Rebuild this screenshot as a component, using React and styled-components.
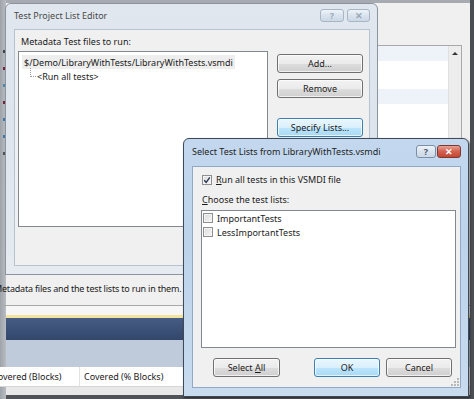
import React from "react";
import styled, { createGlobalStyle, css } from "styled-components";

const GlobalStyle = createGlobalStyle`
  html, body { margin: 0; padding: 0; }
  body {
    font-family: "Noto Sans", "Open Sans", sans-serif;
    font-size: 9px;
    color: #1b1b1b;
  }
`;

const Desktop = styled.div`
  position: relative;
  width: 474px;
  height: 399px;
  overflow: hidden;
  background: #f0f0f0;
`;

/* ---------- background Visual Studio window ---------- */

const Backdrop = styled.div`
  position: absolute;
  inset: 0;
  display: flex;
  border-right: 4px solid #4b4e53;
`;

const ToolStrip = styled.div`
  width: 6px;
  flex: none;
  background: linear-gradient(90deg, #9ea3aa, #b9bdc2);
  display: flex;
  flex-direction: column;
  gap: 14px;
  padding-top: 50px;
  align-items: flex-end;
`;

const ToolDot = styled.span`
  width: 3px;
  height: 3px;
  background: ${(p) => p.color};
`;

const BackMain = styled.div`
  flex: 1;
  min-width: 0;
  display: flex;
  flex-direction: column;
  border-top: 3px solid #a7abb1;
`;

const BackTop = styled.div`
  height: 269px;
  flex: none;
  display: flex;
  justify-content: flex-end;
  padding: 42px 8px 0 0;
  box-sizing: border-box;
`;

const BackList = styled.div`
  width: 200px;
  height: 92px;
  border: 1px solid #a9a9a9;
  display: flex;
  background: #fff;
`;

const BackRows = styled.div`
  flex: 1;
  display: flex;
  flex-direction: column;
`;

const BackRow = styled.div`
  height: ${(p) => p.h}px;
  background: ${(p) => (p.alt ? "#eef3fa" : "#fff")};
`;

const BackScroll = styled.div`
  width: 13px;
  background: #ededed;
  border-left: 1px solid #e0e0e0;
  display: flex;
  justify-content: center;
  padding-top: 6px;
  box-sizing: border-box;
`;

const UpArrow = styled.span`
  width: 0;
  height: 0;
  border-left: 3px solid transparent;
  border-right: 3px solid transparent;
  border-bottom: 3px solid #333;
`;

const HelpText = styled.div`
  height: 33px;
  flex: none;
  display: flex;
  align-items: center;
  margin-left: -12px;
  letter-spacing: -0.2px;
  border-bottom: 1px solid #a8a8a8;
  white-space: nowrap;
`;

const Gap = styled.div`
  height: 9px;
  flex: none;
  background: #f6f6f6;
  border-bottom: 3px solid #f3e39c;
`;

const NavyBand = styled.div`
  height: 22px;
  flex: none;
  background: linear-gradient(#465c84, #33476b);
`;

const SteelBand = styled.div`
  height: 27px;
  flex: none;
  background: #bfcadb;
`;

const HeaderRow = styled.div`
  height: 19px;
  flex: none;
  background: #fff;
  display: flex;
  margin-left: -14px;
  border-bottom: 1px solid #d5d5d5;
`;

const HeaderCell = styled.div`
  width: ${(p) => p.w}px;
  flex: none;
  display: flex;
  align-items: center;
  padding-left: ${(p) => p.pad}px;
  white-space: nowrap;
  border-right: 1px solid #e3e3e3;
  box-sizing: border-box;
`;

const BackBottom = styled.div`
  flex: 1;
  background: #e8e8e8;
  border-bottom: 4px solid #505357;
`;

/* ---------- dialog windows ---------- */

const Window = styled.div`
  position: absolute;
  left: ${(p) => p.x}px;
  top: ${(p) => p.y}px;
  width: ${(p) => p.w}px;
  height: ${(p) => p.h}px;
  box-sizing: border-box;
  display: flex;
  flex-direction: column;
  padding: 0 7px 8px 8px;
  border-radius: 6px 6px 0 0;
  ${(p) =>
    p.active
      ? css`
          border: 1px solid #3e4a58;
          background: linear-gradient(#c3d8ee, #bcd3ea 40%, #c8dbef);
          box-shadow: 1px 1px 2px rgba(0, 0, 0, 0.5);
        `
      : css`
          border: 1px solid #8a939e;
          background: linear-gradient(#e1e7ee, #dde4ec 40%, #e5ebf1);
        `}
`;

const TitleBar = styled.div`
  height: ${(p) => p.h}px;
  flex: none;
  display: flex;
  align-items: center;
  gap: ${(p) => p.gap}px;
  padding-bottom: 2px;
  box-sizing: border-box;
`;

const Title = styled.div`
  flex: 1;
  color: ${(p) => (p.active ? "#1e1e1e" : "#4a4a4a")};
  white-space: nowrap;
`;

const CaptionButton = styled.div`
  width: ${(p) => p.w}px;
  height: 13px;
  box-sizing: border-box;
  border-radius: 3px;
  display: flex;
  align-items: center;
  justify-content: center;
  font-size: 9px;
  font-weight: bold;
  ${(p) =>
    p.close && p.active
      ? css`
          border: 1px solid #7a3a32;
          background: linear-gradient(#e8a095, #d2604e 50%, #c44632);
          color: #fff;
        `
      : css`
          border: 1px solid ${p.active ? "#7c8fa6" : "#a8b5c4"};
          background: linear-gradient(#eef3f8, #d9e3ee 50%, #cbd8e6);
          color: ${p.active ? "#4a5a6e" : "#9aa7b6"};
        `}
`;

const Client = styled.div`
  flex: 1;
  background: #f0f0f0;
  border: 1px solid ${(p) => (p.active ? "#8fa9c6" : "#b7c3d0")};
  position: relative;
`;

const Label = styled.div`
  line-height: 16px;
  white-space: nowrap;
`;

const Mnemonic = styled.span`
  text-decoration: underline;
`;

const ListBox = styled.div`
  width: ${(p) => p.w}px;
  height: ${(p) => p.h}px;
  box-sizing: border-box;
  background: #fff;
  border: 1px solid #828790;
`;

const Button = styled.div`
  width: ${(p) => p.w}px;
  height: 19px;
  box-sizing: border-box;
  border-radius: 3px;
  display: flex;
  align-items: center;
  justify-content: center;
  white-space: nowrap;
  border: 1px solid ${(p) => (p.primary ? "#3c7fb1" : "#707070")};
  background: ${(p) =>
    p.primary
      ? "linear-gradient(#eaf6fd, #d9f0fc 50%, #bee6fd 51%, #a7d9f5)"
      : "linear-gradient(#f2f2f2, #ebebeb 50%, #dddddd 51%, #cfcfcf)"};
  box-shadow: inset 0 0 0 1px rgba(255, 255, 255, 0.7);
`;

/* editor dialog */

const EditorBody = styled.div`
  display: grid;
  grid-template-columns: 250px 86px;
  column-gap: 9px;
  padding: 4px 0 0 3px;
`;

const EditorLabel = styled(Label)`
  grid-column: 1 / 3;
  padding-left: 3px;
  height: 17px;
`;

const ButtonColumn = styled.div`
  display: flex;
  flex-direction: column;
  padding-top: 3px;
  gap: 6px;
`;

const Spacer = styled.div`
  height: 8px;
`;

const TreeList = styled(ListBox)`
  display: flex;
  flex-direction: column;
  padding: 3px 3px;
`;

const TreeRow = styled.div`
  height: 14px;
  display: flex;
  align-items: center;
  white-space: nowrap;
  ${(p) =>
    p.selected &&
    css`
      background: #eeeeee;
      align-self: flex-start;
      padding: 0 2px;
    `}
`;

const TreeChild = styled.div`
  display: flex;
  align-items: flex-start;
  padding-left: 8px;
  height: 14px;
`;

const Branch = styled.span`
  width: 5px;
  height: 8px;
  margin-top: -1px;
  margin-right: 1px;
  border-left: 1px dotted #9a9a9a;
  border-bottom: 1px dotted #9a9a9a;
  flex: none;
`;

/* selector dialog */

const SelectorBody = styled.div`
  display: flex;
  flex-direction: column;
  padding: 5px 8px 0 8px;
  height: 100%;
  box-sizing: border-box;
`;

const CheckRow = styled.div`
  display: flex;
  align-items: center;
  gap: 4px;
  height: ${(p) => p.h}px;
  white-space: nowrap;
`;

const Box = styled.span`
  width: 10px;
  height: 10px;
  box-sizing: border-box;
  border: 1px solid #8e8f8f;
  background: linear-gradient(135deg, #dcdcdc, #f6f6f6);
  box-shadow: inset 0 0 0 1px #f4f4f4;
  display: flex;
  align-items: center;
  justify-content: center;
  flex: none;
`;

const OptionRow = styled.div`
  padding-left: 1px;
`;

const ChooseLabel = styled(Label)`
  margin-top: 5px;
  padding-left: 1px;
`;

const ItemList = styled(ListBox)`
  margin-top: 2px;
  display: flex;
  flex-direction: column;
  padding: 0 1px;
`;

const Footer = styled.div`
  display: flex;
  margin-top: 10px;
  padding-left: 12px;
`;

const FooterRight = styled.div`
  display: flex;
  gap: 6px;
  margin-left: auto;
`;

const Grip = styled.svg`
  position: absolute;
  right: 1px;
  bottom: 1px;
`;

const CheckMark = () => (
  <svg width="8" height="8" viewBox="0 0 8 8">
    <path d="M1.2 4.2 L3.2 6.3 L6.8 1.4" fill="none" stroke="#2a3a55" strokeWidth="1.4" />
  </svg>
);

const Checkbox = ({ checked, h = 15, children }) => (
  <CheckRow h={h}>
    <Box>{checked && <CheckMark />}</Box>
    <span>{children}</span>
  </CheckRow>
);

export default function App() {
  return (
    <>
      <GlobalStyle />
      <Desktop>
        <Backdrop>
          <ToolStrip>
            <ToolDot color="#404448" />
            <ToolDot color="#7a1f3a" />
            <ToolDot color="#4a8aa8" />
            <ToolDot color="#7a1f3a" />
            <ToolDot color="#3f78a8" />
            <ToolDot color="#3f78a8" />
            <ToolDot color="#505050" />
          </ToolStrip>
          <BackMain>
            <BackTop>
              <BackList>
                <BackRows>
                  <BackRow h={15} alt />
                  <BackRow h={28} />
                  <BackRow h={15} alt />
                  <BackRow h={32} />
                </BackRows>
                <BackScroll>
                  <UpArrow />
                </BackScroll>
              </BackList>
            </BackTop>
            <HelpText>Metadata files and the test lists to run in them.</HelpText>
            <Gap />
            <NavyBand />
            <SteelBand />
            <HeaderRow>
              <HeaderCell w={88} pad={0}>
                Covered (Blocks)
              </HeaderCell>
              <HeaderCell w={200} pad={4}>
                Covered (% Blocks)
              </HeaderCell>
            </HeaderRow>
            <BackBottom />
          </BackMain>
        </Backdrop>

        <Window x={5} y={3} w={373} h={272}>
          <TitleBar h={25} gap={3}>
            <Title>Test Project List Editor</Title>
            <CaptionButton w={24}>?</CaptionButton>
            <CaptionButton w={23} close>
              ✕
            </CaptionButton>
          </TitleBar>
          <Client>
            <EditorBody>
              <EditorLabel>Metadata Test files to run:</EditorLabel>
              <TreeList w={250} h={176}>
                <TreeRow selected>$/Demo/LibraryWithTests/LibraryWithTests.vsmdi</TreeRow>
                <TreeChild>
                  <Branch />
                  <TreeRow>&lt;Run all tests&gt;</TreeRow>
                </TreeChild>
              </TreeList>
              <ButtonColumn>
                <Button w={86}>Add...</Button>
                <Button w={86}>Remove</Button>
                <Spacer />
                <Button w={86} primary>
                  Specify Lists...
                </Button>
              </ButtonColumn>
            </EditorBody>
          </Client>
        </Window>

        <Window x={183} y={138} w={286} h={259} active>
          <TitleBar h={27} gap={1}>
            <Title active>Select Test Lists from LibraryWithTests.vsmdi</Title>
            <CaptionButton w={20} active>
              ?
            </CaptionButton>
            <CaptionButton w={24} close active>
              ✕
            </CaptionButton>
          </TitleBar>
          <Client active>
            <SelectorBody>
              <OptionRow>
                <Checkbox checked>
                  <Mnemonic>R</Mnemonic>un all tests in this VSMDI file
                </Checkbox>
              </OptionRow>
              <ChooseLabel>
                <Mnemonic>C</Mnemonic>hoose the test lists:
              </ChooseLabel>
              <ItemList w={255} h={138}>
                <Checkbox h={14}>ImportantTests</Checkbox>
                <Checkbox h={14}>LessImportantTests</Checkbox>
              </ItemList>
              <Footer>
                <Button w={67}>
                  Select&nbsp;<Mnemonic>A</Mnemonic>ll
                </Button>
                <FooterRight>
                  <Button w={66} primary>
                    OK
                  </Button>
                  <Button w={66}>Cancel</Button>
                </FooterRight>
              </Footer>
            </SelectorBody>
            <Grip width="9" height="9" viewBox="0 0 9 9">
              <g fill="#b8b8b8">
                <rect x="7" y="1" width="2" height="2" />
                <rect x="4" y="4" width="2" height="2" />
                <rect x="7" y="4" width="2" height="2" />
                <rect x="1" y="7" width="2" height="2" />
                <rect x="4" y="7" width="2" height="2" />
                <rect x="7" y="7" width="2" height="2" />
              </g>
            </Grip>
          </Client>
        </Window>
      </Desktop>
    </>
  );
}
